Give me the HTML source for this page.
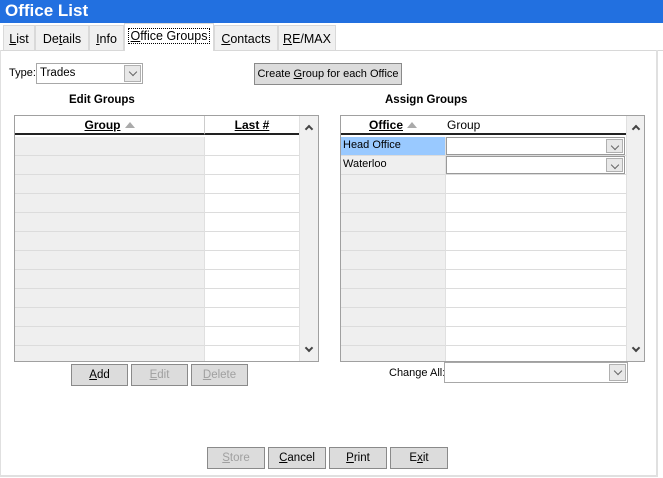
<!DOCTYPE html>
<html><head><style>
*{box-sizing:border-box;margin:0;padding:0}
body{width:663px;height:478px;background:#fff;font-family:"Liberation Sans",sans-serif;font-size:12px;color:#000;position:relative;overflow:hidden}
.a{position:absolute;white-space:nowrap}
.title{left:0;top:0;width:663px;height:23px;background:#2270e0;color:#fff;font-weight:bold;font-size:17px;padding:1px 0 0 5px}
.tabs{left:0;top:23px;width:663px;height:28px;background:#fff;border-bottom:1px solid #d8d8d8}
.tab{position:absolute;top:2px;height:25px;background:#f0f0f0;border:1px solid #d9d9d9;border-bottom:none;font-size:12.5px;padding-top:6px;text-align:center;white-space:nowrap}
.tab.act{top:0;height:28px;background:#fff;padding-top:5px}
.tab.act span{border:1px dotted #000;padding:0 2px}
.frame{left:0;top:50px;width:658px;height:427px;border-right:2px solid #e0e0e0;border-bottom:2px solid #e0e0e0;border-left:1px solid #e0e0e0}
.btn{position:absolute;background:#dcdcdc;border:1px solid #8a8a8a;text-align:center;font-size:11.5px;padding-top:4px;white-space:nowrap}
.dis{color:#a0a0a0}
.sel{position:absolute;background:#fff;border:1px solid #a8a8a8}
.arr{position:absolute;right:1px;top:1px;bottom:1px;width:17px;background:#e8e8e8;border:1px solid #b0b0b0}
.arr:after{content:"";position:absolute;left:5px;top:3px;width:5px;height:5px;border-right:1px solid #666;border-bottom:1px solid #666;transform:rotate(45deg)}
.grid{position:absolute;border:1px solid #a0a0a0;background:#fff;overflow:hidden}
.hdr{position:absolute;top:0;height:19px;border-bottom:2px solid #222;font-size:12px;padding-top:2px;white-space:nowrap}
.row{position:absolute;height:19px;border-bottom:1px solid #dcdcdc;white-space:nowrap}
.sb{position:absolute;top:0;bottom:0;background:#f0f0f0;border-left:1px solid #e0e0e0}
.tri{display:inline-block;width:0;height:0;border-left:5px solid transparent;border-right:5px solid transparent;border-bottom:6px solid #aaa;margin-left:4px;vertical-align:1px}
u{text-decoration:underline}
</style></head><body>
<div class="a title">Office List</div>
<div class="a tabs">
<div class="tab" style="left:3px;width:32px"><u>L</u>ist</div>
<div class="tab" style="left:35px;width:54px">De<u>t</u>ails</div>
<div class="tab" style="left:89px;width:35px"><u>I</u>nfo</div>
<div class="tab act" style="left:124px;width:90px"><span><u>O</u>ffice Groups</span></div>
<div class="tab" style="left:214px;width:64px"><u>C</u>ontacts</div>
<div class="tab" style="left:278px;width:58px"><u>R</u>E/MAX</div>
</div>
<div class="a frame"></div>
<div class="a" style="left:9px;top:67px;font-size:11px">Type:</div>
<div class="sel" style="left:36px;top:63px;width:107px;height:21px"><span style="position:absolute;left:3px;top:3px;font-size:11.5px">Trades</span><div class="arr"></div></div>
<div class="btn" style="left:254px;top:63px;width:148px;height:22px;padding-top:4px;font-size:11px">Create <u>G</u>roup for each Office</div>
<div class="a" style="left:69px;top:94px;font-weight:bold;font-size:11.5px">Edit Groups</div>
<div class="a" style="left:385px;top:94px;font-weight:bold;font-size:11.5px">Assign Groups</div>

<div class="grid" style="left:14px;top:115px;width:305px;height:247px">
<div class="hdr" style="left:0;width:189px;text-align:center;font-weight:bold"><u>Group</u><span class="tri"></span></div>
<div class="hdr" style="left:189px;width:95px;text-align:center;border-left:1px solid #ccc;font-weight:bold"><u>Last #</u></div>
<div id="lr"></div>
<div class="sb" style="left:284px;width:20px"><div style="position:absolute;left:6px;top:10px;width:6px;height:6px;border-left:2px solid #444;border-top:2px solid #444;transform:rotate(45deg)"></div><div style="position:absolute;left:6px;bottom:10px;width:6px;height:6px;border-right:2px solid #444;border-bottom:2px solid #444;transform:rotate(45deg)"></div></div>
</div>

<div class="grid" style="left:340px;top:115px;width:305px;height:247px">
<div class="hdr" style="left:0;width:104px;text-align:center;font-weight:bold"><u>Office</u><span class="tri"></span></div>
<div class="hdr" style="left:104px;width:181px;padding-left:2px">Group</div>
<div id="rr"></div>
<div class="sb" style="left:285px;width:19px"><div style="position:absolute;left:6px;top:10px;width:6px;height:6px;border-left:2px solid #444;border-top:2px solid #444;transform:rotate(45deg)"></div><div style="position:absolute;left:6px;bottom:10px;width:6px;height:6px;border-right:2px solid #444;border-bottom:2px solid #444;transform:rotate(45deg)"></div></div>
</div>

<div class="btn" style="left:71px;top:364px;width:57px;height:22px"><u>A</u>dd</div>
<div class="btn dis" style="left:131px;top:364px;width:57px;height:22px"><u>E</u>dit</div>
<div class="btn dis" style="left:191px;top:364px;width:57px;height:22px"><u>D</u>elete</div>
<div class="a" style="left:389px;top:367px;font-size:11px">Change All:</div>
<div class="sel" style="left:444px;top:362px;width:184px;height:21px"><div class="arr"></div></div>

<div class="btn dis" style="left:207px;top:447px;width:58px;height:22px"><u>S</u>tore</div>
<div class="btn" style="left:268px;top:447px;width:58px;height:22px"><u>C</u>ancel</div>
<div class="btn" style="left:329px;top:447px;width:58px;height:22px"><u>P</u>rint</div>
<div class="btn" style="left:390px;top:447px;width:58px;height:22px">E<u>x</u>it</div>
<script>
var h='';for(var i=0;i<12;i++){var t=21+i*19;h+='<div class="row" style="left:0;top:'+t+'px;width:189px;background:#efefef"></div><div class="row" style="left:189px;top:'+t+'px;width:95px;border-left:1px solid #e0e0e0"></div>';}
document.getElementById('lr').innerHTML=h;
h='';var n=['Head Office','Waterloo'];for(i=0;i<12;i++){var t=21+i*19;var bg=i==0?'#99c9ff':'#efefef';h+='<div class="row" style="left:0;top:'+t+'px;width:104px;background:'+bg+';font-size:11px;padding:2px 0 0 2px">'+(n[i]||'')+'</div><div class="row" style="left:104px;top:'+t+'px;width:181px;border-left:1px solid #e0e0e0">'+(i<2?'<div class="sel" style="left:0;top:0;width:179px;height:18px;border-color:#999"><div class="arr"></div></div>':'')+'</div>';}
document.getElementById('rr').innerHTML=h;
</script>
</body></html>
